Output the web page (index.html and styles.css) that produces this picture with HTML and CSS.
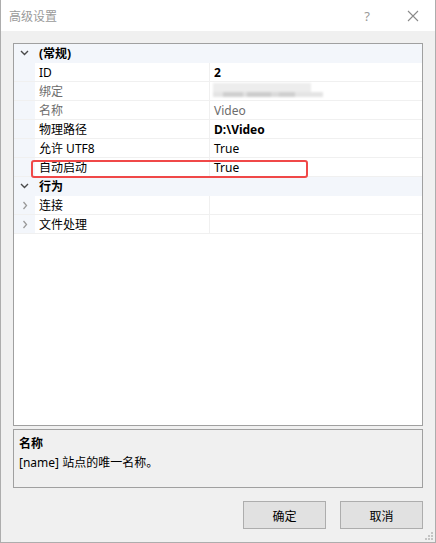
FILE: index.html
```html
<!DOCTYPE html>
<html>
<head>
<meta charset="utf-8">
<link rel="stylesheet" href="styles.css">
</head>
<body>
<div class="window">
  <div class="titlebar">
    <span class="title">高级设置</span>
    <span class="help">?</span>
    <svg class="close" width="12" height="12" viewBox="0 0 12 12"><path d="M1 1L11 11M11 1L1 11" stroke="#8a8a8a" stroke-width="1.1" fill="none"/></svg>
  </div>
  <div class="content">
    <div class="grid">
      <div class="row cat">
        <span class="gut"><svg width="9" height="6" viewBox="0 0 9 6"><path d="M1 1L4.5 4.5L8 1" stroke="#4a4a4a" stroke-width="1.4" fill="none"/></svg></span>
        <span class="catname">(常规)</span>
      </div>
      <div class="row"><span class="gut"></span><span class="name">ID</span><span class="val bold">2</span></div>
      <div class="row"><span class="gut"></span><span class="name dis">绑定</span><span class="val"><span class="blur"><span class="b1"></span><span class="b2"></span></span></span></div>
      <div class="row"><span class="gut"></span><span class="name dis">名称</span><span class="val dis">Video</span></div>
      <div class="row"><span class="gut"></span><span class="name">物理路径</span><span class="val bold">D:\Video</span></div>
      <div class="row"><span class="gut"></span><span class="name">允许 UTF8</span><span class="val">True</span></div>
      <div class="row"><span class="gut"></span><span class="name">自动启动</span><span class="val">True</span></div>
      <div class="row cat">
        <span class="gut"><svg width="9" height="6" viewBox="0 0 9 6"><path d="M1 1L4.5 4.5L8 1" stroke="#4a4a4a" stroke-width="1.4" fill="none"/></svg></span>
        <span class="catname">行为</span>
      </div>
      <div class="row"><span class="gut"><svg width="6" height="9" viewBox="0 0 6 9"><path d="M1.5 1L4.5 4.5L1.5 8" stroke="#9a9a9a" stroke-width="1.3" fill="none"/></svg></span><span class="name">连接</span><span class="val"></span></div>
      <div class="row"><span class="gut"><svg width="6" height="9" viewBox="0 0 6 9"><path d="M1.5 1L4.5 4.5L1.5 8" stroke="#9a9a9a" stroke-width="1.3" fill="none"/></svg></span><span class="name">文件处理</span><span class="val"></span></div>
      <div class="highlight"></div>
    </div>
    <div class="desc">
      <div class="desc-title">名称</div>
      <div class="desc-text">[name] 站点的唯一名称。</div>
    </div>
    <div class="buttons">
      <button class="btn">确定</button>
      <button class="btn">取消</button>
    </div>
  </div>
  <svg class="grip" width="10" height="10" viewBox="0 0 10 10">
    <rect x="7" y="1" width="2" height="2" fill="#c4c4c4"/>
    <rect x="4" y="4" width="2" height="2" fill="#c4c4c4"/>
    <rect x="7" y="4" width="2" height="2" fill="#c4c4c4"/>
    <rect x="1" y="7" width="2" height="2" fill="#c4c4c4"/>
    <rect x="4" y="7" width="2" height="2" fill="#c4c4c4"/>
    <rect x="7" y="7" width="2" height="2" fill="#c4c4c4"/>
  </svg>
</div>
</body>
</html>
```

FILE: styles.css
```css
* { box-sizing: border-box; }
html, body { margin: 0; padding: 0; }
body {
  font-family: "Noto Sans", "Noto Sans CJK SC", sans-serif;
  font-size: 12px;
  color: #000;
}
.window {
  position: relative;
  width: 436px;
  height: 543px;
  background: #f0f0f0;
  border: 1px solid #adadad;
  border-top: none;
  display: flex;
  flex-direction: column;
}
.titlebar {
  height: 31px;
  background: #fff;
  display: flex;
  align-items: center;
  padding-left: 8px;
  flex: none;
}
.title {
  color: #9a9a9a;
  font-size: 12px;
  line-height: 16px;
  font-family: "Noto Sans CJK SC", sans-serif;
  flex: 1;
}
.help {
  color: #9a9a9a;
  font-family: "Noto Sans", sans-serif;
  font-size: 13px;
  margin-right: 37px;
}
.close { margin-right: 16px; }
.content {
  flex: 1;
  padding: 12px 12px 0 12px;
  display: flex;
  flex-direction: column;
}
.grid {
  position: relative;
  height: 383px;
  border: 1px solid #a0a0a0;
  background: #fff;
  flex: none;
}
.row {
  display: flex;
  height: 19px;
  border-bottom: 1px solid #f0f0f0;
  line-height: 20px;
}
.gut {
  width: 21px;
  background: #f3f6fb;
  display: flex;
  align-items: center;
  justify-content: center;
  flex: none;
}
.row.cat { background: #f3f6fb; border-bottom-color: #f3f6fb; }
.row.cat .gut { justify-content: flex-start; padding-left: 6px; }
.row .gut svg[width="6"] { margin-left: 1px; }
.catname { font-weight: bold; padding-left: 4px; }
.name {
  width: 174px;
  padding-left: 4px;
  flex: none;
  white-space: nowrap;
}
.val {
  flex: 1;
  border-left: 1px solid #f0f0f0;
  padding-left: 4px;
  white-space: nowrap;
  position: relative;
}
.bold { font-weight: bold; }
.dis { color: #6d6d6d; }
.blur {
  position: absolute;
  left: 3px;
  top: 1px;
  width: 112px;
  height: 16px;
  filter: blur(1.2px);
}
.b1 {
  position: absolute;
  left: 0; top: 0;
  width: 98px; height: 9px;
  background: #ededed;
}
.b2 {
  position: absolute;
  left: 0; top: 9px;
  width: 110px; height: 5px;
  background: linear-gradient(90deg, #e4e4e4 0 10px, #cfcfcf 10px 30px, #e0e0e0 30px 34px, #cccccc 34px 58px, #dadada 58px 66px, #cfcfcf 66px 82px, #e4e4e4 82px 110px);
}
.highlight {
  position: absolute;
  left: 17px;
  top: 116px;
  width: 277px;
  height: 18px;
  border: 2px solid #f04848;
  border-radius: 3px;
}
.desc {
  margin-top: 3px;
  height: 59px;
  border: 1px solid #a0a0a0;
  padding: 4px 5px;
  flex: none;
}
.desc-title { font-weight: bold; line-height: 19px; }
.desc-text { line-height: 19px; }
.buttons {
  margin-top: 13px;
  display: flex;
  justify-content: flex-end;
  gap: 14px;
}
.btn {
  width: 83px;
  height: 28px;
  background: #e1e1e1;
  border: 1px solid #adadad;
  font-family: "Noto Sans CJK SC", sans-serif;
  font-size: 12px;
  color: #000;
  padding: 0;
}
.grip {
  position: absolute;
  right: 1px;
  bottom: 1px;
}
```
